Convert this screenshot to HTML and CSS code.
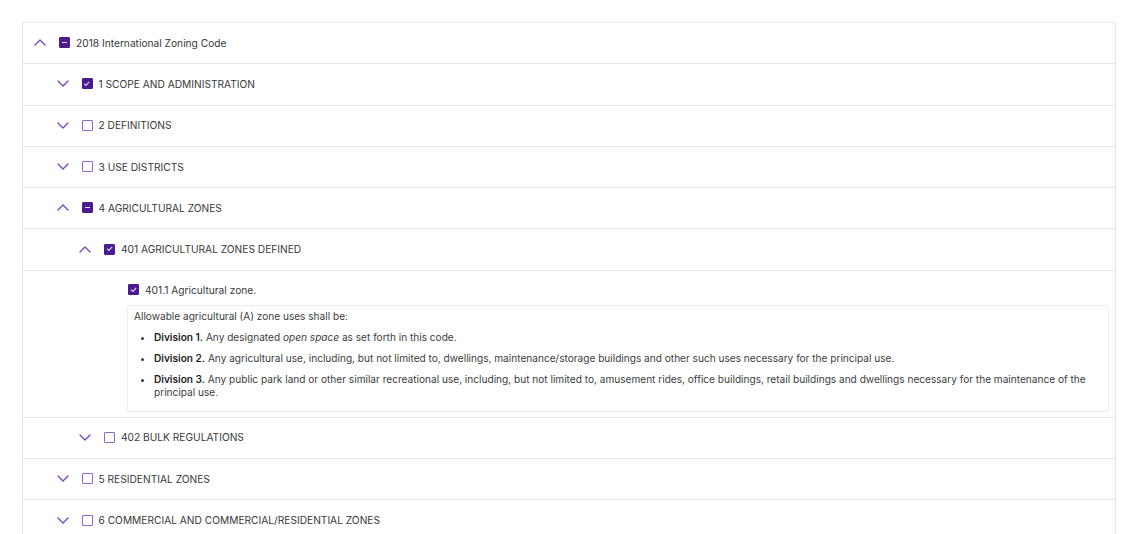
FILE: index.html
```html
<!DOCTYPE html>
<html>
<head>
<meta charset="utf-8">
<link rel="stylesheet" href="styles.css">
</head>
<body>
<div class="page">
  <div class="card">
    <div class="row lvl0">
      <span class="chev"><svg viewBox="0 0 12 7" width="12" height="7"><polyline points="1,6 6,1 11,6"/></svg></span>
      <span class="cb ind"></span>
      <span class="title">2018 International Zoning Code</span>
    </div>
    <div class="row lvl1">
      <span class="chev"><svg viewBox="0 0 12 7" width="12" height="7"><polyline points="1,1 6,6 11,1"/></svg></span>
      <span class="cb on"><svg viewBox="0 0 11 11" width="11" height="11"><polyline points="3,5.6 4.9,7.4 8.2,3.8"/></svg></span>
      <span class="title">1 SCOPE AND ADMINISTRATION</span>
    </div>
    <div class="row lvl1">
      <span class="chev"><svg viewBox="0 0 12 7" width="12" height="7"><polyline points="1,1 6,6 11,1"/></svg></span>
      <span class="cb"></span>
      <span class="title">2 DEFINITIONS</span>
    </div>
    <div class="row lvl1">
      <span class="chev"><svg viewBox="0 0 12 7" width="12" height="7"><polyline points="1,1 6,6 11,1"/></svg></span>
      <span class="cb"></span>
      <span class="title">3 USE DISTRICTS</span>
    </div>
    <div class="row lvl1">
      <span class="chev"><svg viewBox="0 0 12 7" width="12" height="7"><polyline points="1,6 6,1 11,6"/></svg></span>
      <span class="cb ind"></span>
      <span class="title">4 AGRICULTURAL ZONES</span>
    </div>
    <div class="row lvl2">
      <span class="chev"><svg viewBox="0 0 12 7" width="12" height="7"><polyline points="1,6 6,1 11,6"/></svg></span>
      <span class="cb on"><svg viewBox="0 0 11 11" width="11" height="11"><polyline points="3,5.6 4.9,7.4 8.2,3.8"/></svg></span>
      <span class="title">401 AGRICULTURAL ZONES DEFINED</span>
    </div>
    <div class="section">
      <div class="section-head">
        <span class="cb on"><svg viewBox="0 0 11 11" width="11" height="11"><polyline points="3,5.6 4.9,7.4 8.2,3.8"/></svg></span>
        <span class="title">401.1 Agricultural zone.</span>
      </div>
      <div class="section-body">
        <p>Allowable agricultural (A) zone uses shall be:</p>
        <ul>
          <li><b>Division 1.</b> Any designated <i>open space</i> as set forth in this code.</li>
          <li><b>Division 2.</b> Any agricultural use, including, but not limited to, dwellings, maintenance/storage buildings and other such uses necessary for the principal use.</li>
          <li><b>Division 3.</b> Any public park land or other similar recreational use, including, but not limited to, amusement rides, office buildings, retail buildings and dwellings necessary for the maintenance of the principal use.</li>
        </ul>
      </div>
    </div>
    <div class="row lvl2">
      <span class="chev"><svg viewBox="0 0 12 7" width="12" height="7"><polyline points="1,1 6,6 11,1"/></svg></span>
      <span class="cb"></span>
      <span class="title">402 BULK REGULATIONS</span>
    </div>
    <div class="row lvl1">
      <span class="chev"><svg viewBox="0 0 12 7" width="12" height="7"><polyline points="1,1 6,6 11,1"/></svg></span>
      <span class="cb"></span>
      <span class="title">5 RESIDENTIAL ZONES</span>
    </div>
    <div class="row lvl1">
      <span class="chev"><svg viewBox="0 0 12 7" width="12" height="7"><polyline points="1,1 6,6 11,1"/></svg></span>
      <span class="cb"></span>
      <span class="title">6 COMMERCIAL AND COMMERCIAL/RESIDENTIAL ZONES</span>
    </div>
  </div>
</div>
</body>
</html>
```

FILE: styles.css
```css
* { box-sizing: border-box; }
html, body { margin: 0; padding: 0; background: #fff; }
body {
  font-family: Inter, "Noto Sans", sans-serif;
  color: #333;
  overflow: hidden;
}
.page {
  padding: 22px 20px 0 22px;
}
.card {
  border: 1px solid #e6e6e6;
  border-bottom: none;
  border-radius: 3px 3px 0 0;
  box-shadow: 0 0 2px rgba(0,0,0,0.04);
}
.row {
  display: flex;
  align-items: center;
  height: 41.3px;
  padding-bottom: 1px;
  border-bottom: 1px solid #e6e6e6;
}
.lvl0 { padding-left: 11px; }
.lvl1 { padding-left: 33.5px; }
.lvl2 { padding-left: 56px; }
.chev {
  width: 12px;
  height: 7px;
  display: flex;
  margin-right: 13px;
}
.chev svg polyline {
  fill: none;
  stroke: #7a44c2;
  stroke-width: 1.4;
  stroke-linecap: round;
  stroke-linejoin: round;
}
.cb {
  width: 11px;
  height: 11px;
  border: 1.3px solid #9067cc;
  border-radius: 1px;
  margin-right: 6px;
  flex: none;
  display: flex;
  align-items: center;
  justify-content: center;
  position: relative;
}
.cb.on, .cb.ind {
  background: #4b1b8f;
  border-color: #4b1b8f;
}
.cb.on svg {
  position: absolute;
  left: -1.3px;
  top: -1.3px;
}
.cb.on svg polyline {
  fill: none;
  stroke: #e2d6f6;
  stroke-width: 1.1;
}
.cb.ind::after {
  content: "";
  width: 5px;
  height: 1.3px;
  background: #e3d6f5;
}
.title {
  font-size: 10.2px;
  color: #383838;
}
.section {
  border-bottom: 1px solid #e6e6e6;
  padding: 11px 6px 5px 104px;
}
.section-head {
  display: flex;
  align-items: center;
  padding-left: 1px;
  height: 16px;
  margin-bottom: 7px;
}
.section-body {
  border: 1px solid #ededed;
  border-radius: 3px;
  padding: 4px 16px 12px 6px;
  font-size: 10.1px;
  color: #3c3c3c;
  line-height: 13px;
}
.section-body p {
  margin: 0 0 8px 0;
}
.section-body ul {
  margin: 0;
  padding-left: 20px;
}
.section-body li {
  margin-bottom: 8px;
}
.section-body li:last-child { margin-bottom: 0; }
.section-body b { font-weight: 600; color: #222; }
```
